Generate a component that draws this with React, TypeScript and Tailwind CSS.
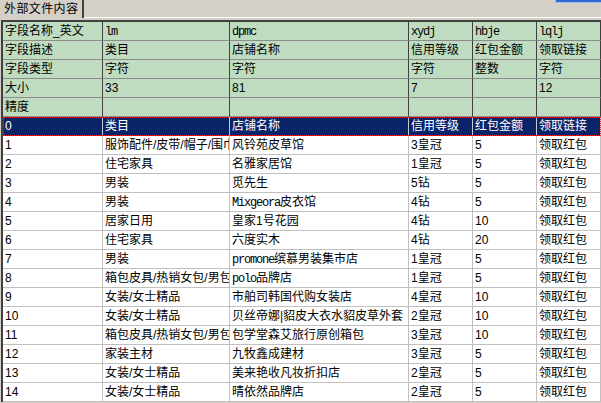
import React from "react";

const widths = ["w-[100px]", "w-[127px]", "w-[179px]", "w-[64px]", "w-[64px]", "w-[64px]"];

const headerRows = [
  ["字段名称_英文", "lm", "dpmc", "xydj", "hbje", "lqlj"],
  ["字段描述", "类目", "店铺名称", "信用等级", "红包金额", "领取链接"],
  ["字段类型", "字符", "字符", "字符", "整数", "字符"],
  ["大小", "33", "81", "7", "", "12"],
  ["精度", "", "", "", "", ""],
];

const selected = ["0", "类目", "店铺名称", "信用等级", "红包金额", "领取链接"];

const rows = [
  ["1", "服饰配件/皮带/帽子/围巾", "风铃苑皮草馆", "3皇冠", "5", "领取红包"],
  ["2", "住宅家具", "名雅家居馆", "1皇冠", "5", "领取红包"],
  ["3", "男装", "觅先生", "5钻", "5", "领取红包"],
  ["4", "男装", "Mixgeora皮衣馆", "4钻", "5", "领取红包"],
  ["5", "居家日用", "皇家1号花园", "4钻", "10", "领取红包"],
  ["6", "住宅家具", "六度实木", "4钻", "20", "领取红包"],
  ["7", "男装", "promone缤慕男装集市店", "1皇冠", "5", "领取红包"],
  ["8", "箱包皮具/热销女包/男包", "polo品牌店", "1皇冠", "5", "领取红包"],
  ["9", "女装/女士精品", "市舶司韩国代购女装店", "4皇冠", "10", "领取红包"],
  ["10", "女装/女士精品", "贝丝帝娜|貂皮大衣水貂皮草外套", "2皇冠", "10", "领取红包"],
  ["11", "箱包皮具/热销女包/男包", "包学堂森艾旅行原创箱包", "3皇冠", "10", "领取红包"],
  ["12", "家装主材", "九牧鑫成建材", "3皇冠", "5", "领取红包"],
  ["13", "女装/女士精品", "美来艳收凡妆折扣店", "2皇冠", "5", "领取红包"],
  ["14", "女装/女士精品", "晴依然品牌店", "2皇冠", "5", "领取红包"],
];

// latin letters render narrow like the old bitmap font
function Txt({ s }: { s: string }) {
  const parts = s.split(/([A-Za-z]+)/);
  return (
    <>
      {parts.map((p, i) =>
        /^[A-Za-z]+$/.test(p) ? (
          <span key={i} className="font-['Liberation_Mono'] tracking-[-1.2px]">
            {p}
          </span>
        ) : (
          <span key={i}>{p}</span>
        )
      )}
    </>
  );
}

const HeaderRow = ({ cells }: { cells: string[] }) => (
  <div className="flex">
    {cells.map((c, i) => (
      <div
        key={i}
        className={`${widths[i]} h-[19px] shrink-0 overflow-hidden whitespace-nowrap border-r border-b border-r-[#404040] border-b-[#8c8c8c] bg-[#c0dcc0] pl-[2px] leading-[18px] text-black`}
      >
        <Txt s={c} />
      </div>
    ))}
  </div>
);

export default function App() {
  return (
    <div className="relative h-[403px] w-[601px] overflow-hidden bg-[#d4d0c8] font-['Liberation_Sans','Noto_Sans_CJK_SC',sans-serif] text-[12px]">
      <div className="absolute left-[555px] top-0 h-[3px] w-[46px] rounded-bl-[2px] border-l border-b border-[#9fbfee] bg-[#2f68d0]" />

      <div className="flex h-[18px] border-b border-white">
        <div className="-mb-px flex h-[18px] w-[84px] items-center border-r-2 border-r-[#404040] bg-[#d4d0c8] pl-[4px] tracking-[0.4px] text-black">
          外部文件内容
        </div>
      </div>

      <div className="ml-[1px] mt-[2px] border-t-2 border-l-2 border-[#404040]">
        {headerRows.map((r, i) => (
          <HeaderRow key={i} cells={r} />
        ))}

        <div className="flex bg-[#0a246a] text-white outline-1 -outline-offset-1 outline-dotted outline-[#ff2020]">
          {selected.map((c, i) => (
            <div
              key={i}
              className={`${widths[i]} h-[19px] shrink-0 overflow-hidden whitespace-nowrap border-r border-b border-r-[#c8c8c8] border-b-[#0a246a] pl-[2px] leading-[18px]`}
            >
              {c}
            </div>
          ))}
        </div>

        {rows.map((r, ri) => (
          <div key={ri} className="flex bg-white text-black">
            {r.map((c, i) => (
              <div
                key={i}
                className={`${widths[i]} h-[19px] shrink-0 overflow-hidden whitespace-nowrap border-r border-b border-[#c0c0c0] pl-[2px] leading-[18px]`}
              >
                <Txt s={c} />
              </div>
            ))}
          </div>
        ))}
      </div>
    </div>
  );
}
